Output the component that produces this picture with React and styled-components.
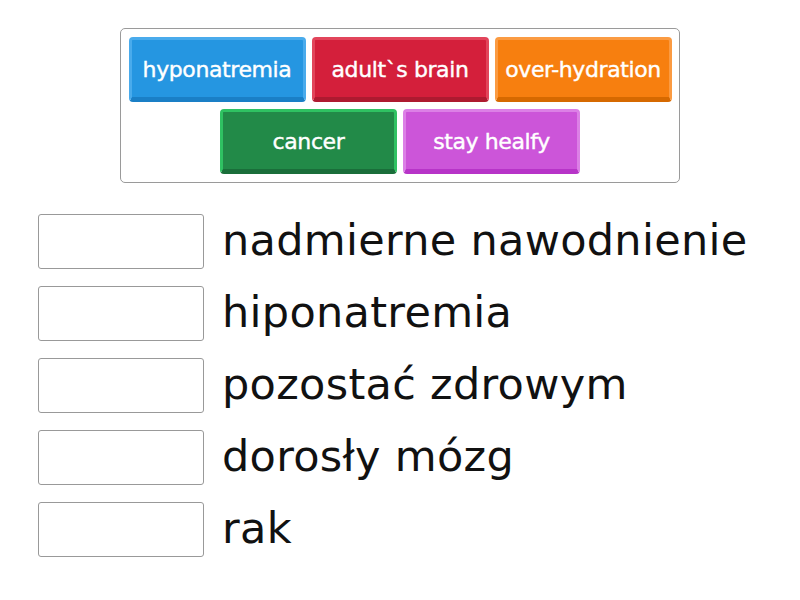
import styled, { createGlobalStyle } from 'styled-components';

const GlobalStyle = createGlobalStyle`
  body {
    margin: 0;
    background: #fff;
    font-family: "DejaVu Sans", Lato, sans-serif;
  }
`;

const Page = styled.div`
  width: 800px;
  padding-top: 28px;
`;

const Bank = styled.div`
  box-sizing: border-box;
  width: 560px;
  margin: 0 0 0 120px;
  padding: 8px 7px;
  border: 1px solid #9a9a9a;
  border-radius: 5px;
  display: flex;
  flex-wrap: wrap;
  justify-content: center;
  gap: 7px 6px;
`;

const Tile = styled.div`
  box-sizing: border-box;
  width: 177px;
  height: 65px;
  display: flex;
  align-items: center;
  justify-content: center;
  color: #fff;
  font-size: 22px;
  letter-spacing: -0.4px;
  -webkit-text-stroke: 0.4px #fff;
  border-radius: 4px;
  background: ${({ $c }) => $c.main};
  border: 3px solid ${({ $c }) => $c.light};
  border-bottom: 5px solid ${({ $c }) => $c.dark};
  padding-top: 2px;
  white-space: nowrap;
`;

const List = styled.div`
  margin: 31px 0 0 38px;
  display: flex;
  flex-direction: column;
  gap: 17px;
`;

const Row = styled.div`
  display: flex;
  align-items: center;
  gap: 18px;
`;

const Slot = styled.div`
  box-sizing: border-box;
  width: 166px;
  height: 55px;
  border: 1px solid #999;
  border-radius: 3px;
  background: #fff;
`;

const Label = styled.span`
  font-size: 43px;
  letter-spacing: 0.3px;
  color: #111;
  line-height: 1;
  padding-bottom: 2px;
  white-space: nowrap;
`;

const palette = {
  blue: { main: '#2596e1', light: '#49abec', dark: '#1a7fc6' },
  red: { main: '#d41f3b', light: '#e2455b', dark: '#ae1a30' },
  orange: { main: '#f77f0f', light: '#fb9b42', dark: '#d66900' },
  green: { main: '#228a48', light: '#2fc262', dark: '#1a6e3a' },
  purple: { main: '#cc55d9', light: '#dc80e6', dark: '#b734c8' },
};

const tiles = [
  ['hyponatremia', 'blue'],
  ['adult`s brain', 'red'],
  ['over-hydration', 'orange'],
  ['cancer', 'green'],
  ['stay healfy', 'purple'],
];

const targets = [
  'nadmierne nawodnienie',
  'hiponatremia',
  'pozostać zdrowym',
  'dorosły mózg',
  'rak',
];

export default function App() {
  return (
    <Page>
      <GlobalStyle />
      <Bank>
        {tiles.map(([text, color]) => (
          <Tile key={text} $c={palette[color]}>{text}</Tile>
        ))}
      </Bank>
      <List>
        {targets.map((t) => (
          <Row key={t}>
            <Slot />
            <Label>{t}</Label>
          </Row>
        ))}
      </List>
    </Page>
  );
}
